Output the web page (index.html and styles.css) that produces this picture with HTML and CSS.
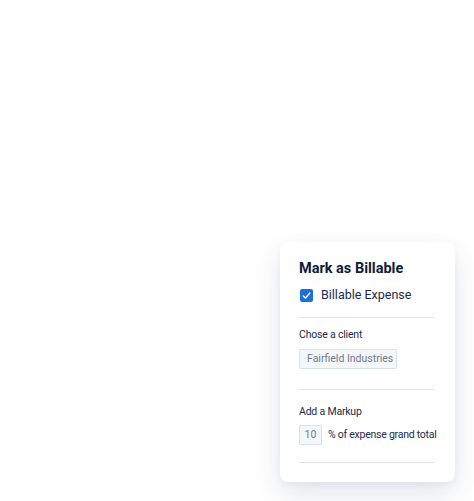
FILE: index.html
```html
<!DOCTYPE html>
<html>
<head>
<meta charset="utf-8">
<link rel="stylesheet" href="styles.css">
</head>
<body>
<div class="page">
  <div class="card">
    <h2 class="title">Mark as Billable</h2>
    <label class="check-row">
      <span class="checkbox">
        <svg viewBox="0 0 13 13" width="13" height="13"><path d="M3.3 6.9 L5.5 9.1 L9.8 4" fill="none" stroke="#fff" stroke-width="1.4" stroke-linecap="round" stroke-linejoin="round"/></svg>
      </span>
      <span class="check-label">Billable Expense</span>
    </label>
    <div class="divider d1"></div>
    <div class="label l1">Chose a client</div>
    <div class="input client">Fairfield Industries</div>
    <div class="divider d2"></div>
    <div class="label l2">Add a Markup</div>
    <div class="markup-row">
      <div class="input small">10</div>
      <span class="markup-text">% of expense grand total</span>
    </div>
    <div class="divider d3"></div>
  </div>
</div>
</body>
</html>
```
FILE: styles.css
```css
* { box-sizing: border-box; }
html, body { margin: 0; padding: 0; background: #fff; }
body { font-family: Roboto, "Noto Sans", sans-serif; color: #1d2a4a; }
.page { width: 474px; height: 501px; padding: 242px 0 0 280px; overflow: hidden; }
.card {
  width: 175px;
  height: 240px;
  background: #fff;
  border-radius: 8px;
  padding: 18px 21px 0 19px;
  box-shadow: 0 12px 28px rgba(40, 55, 95, 0.13), 0 2px 6px rgba(40, 55, 95, 0.05);
  display: flex;
  flex-direction: column;
}
.title { margin: 0; font-size: 14.5px; line-height: 18px; font-weight: 700; color: #0f1b3a; white-space: nowrap; }
.check-row { display: flex; align-items: center; gap: 8px; margin-top: 9px; height: 16px; }
.checkbox { width: 13px; height: 13px; flex-shrink: 0; border-radius: 2px; background: #1e6fd9; display: flex; margin-left: 1px; }
.check-label { font-size: 12.5px; line-height: 16px; color: #1d2a4a; white-space: nowrap; }
.divider { height: 1px; background: #dfe3e9; flex-shrink: 0; }
.d1 { margin-top: 14px; }
.label { font-size: 10.5px; line-height: 14px; color: #1d2a4a; white-space: nowrap; letter-spacing: -0.2px; }
.l1 { margin-top: 10px; }
.input { height: 20px; flex-shrink: 0; background: #f4f7fa; border: 1px solid #d9e0e8; border-radius: 1px; font-size: 10.5px; line-height: 18px; color: #6d7a8c; white-space: nowrap; }
.client { width: 98px; margin-top: 7px; padding-left: 7px; }
.d2 { margin-top: 20px; }
.l2 { margin-top: 15px; }
.markup-row { display: flex; align-items: center; gap: 6px; margin-top: 6px; }
.small { width: 23px; text-align: center; }
.markup-text { font-size: 10.5px; line-height: 14px; color: #1d2a4a; white-space: nowrap; letter-spacing: -0.25px; }
.d3 { margin-top: 17px; }
```
